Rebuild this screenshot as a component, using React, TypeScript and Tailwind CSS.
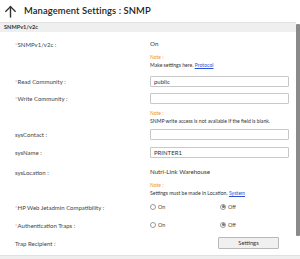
import React from 'react';

const font = { fontFamily: '"Lato", "Open Sans", "DejaVu Sans", sans-serif' };

const Req = () => <span className="text-[#f0a040]">*</span>;

const Label: React.FC<{ req?: boolean; children: React.ReactNode }> = ({ req, children }) => (
  <div className="w-[150px] pl-[15px] text-[6px] text-[#444] shrink-0 flex items-center">
    {req && <Req />}
    <span>{children}</span>
  </div>
);

const Input: React.FC<{ value?: string }> = ({ value }) => (
  <div className="w-[139px] h-[11px] border border-[#c8c8c8] rounded-[1px] bg-white flex items-center px-[3px] text-[6px] text-[#333]">
    {value}
  </div>
);

const Radio: React.FC<{ checked?: boolean; label: string }> = ({ checked, label }) => (
  <div className="flex items-center gap-[2px] text-[5.4px] text-[#444]">
    <div className="w-[6px] h-[6px] rounded-full border border-[#999] bg-white flex items-center justify-center">
      {checked && <div className="w-[3px] h-[3px] rounded-full bg-[#777]" />}
    </div>
    <span>{label}</span>
  </div>
);

const Note: React.FC<{ children: React.ReactNode; top: string }> = ({ children, top }) => (
  <div className={`flex ${top}`}>
    <div className="w-[150px] shrink-0" />
    <div className="flex flex-col">
      <div className="h-[7px] leading-[7px] text-[5px] text-[#f0903a]">Note :</div>
      <div className="h-[8px] leading-[8px] text-[5.1px] text-[#333]">{children}</div>
    </div>
  </div>
);

export default function App() {
  return (
    <div className="w-[300px] h-[259px] bg-white overflow-hidden flex flex-col" style={font}>
      {/* title */}
      <div className="h-[22px] flex items-center pl-[4px] gap-[7px]">
        <svg width="13" height="13" viewBox="0 0 24 24" fill="none" stroke="#333" strokeWidth="2.6" strokeLinecap="square">
          <path d="M12 22V3" />
          <path d="M3.5 11.5L12 3l8.5 8.5" />
        </svg>
        <span className="text-[9.4px] font-semibold text-[#222] tracking-[0.1px]">Management Settings : SNMP</span>
      </div>

      <div className="flex flex-1 min-h-0">
        <div className="flex-1 flex flex-col">
          <div className="h-[10px] bg-[#efefef] border-t border-[#e2e2e2] flex items-center pl-[4px] text-[5.6px] font-bold text-[#333]">
            SNMPv1/v2c
          </div>

          <div className="flex h-[12px] mt-[6px] items-center">
            <Label req>SNMPv1/v2c :</Label>
            <div className="text-[6.2px] text-[#333]">On</div>
          </div>

          <Note top="mt-[4px]">
            Make settings here. <span className="text-[#2a50d8] underline">Protocol</span>
          </Note>

          <div className="flex h-[11px] mt-[7px] items-center">
            <Label req>Read Community :</Label>
            <Input value="public" />
          </div>

          <div className="flex h-[11px] mt-[6px] items-center">
            <Label req>Write Community :</Label>
            <Input />
          </div>

          <Note top="mt-[6px]">SNMP write access is not available if the field is blank.</Note>

          <div className="flex h-[11px] mt-[4px] items-center">
            <Label>sysContact :</Label>
            <Input />
          </div>

          <div className="flex h-[11px] mt-[7px] items-center">
            <Label>sysName :</Label>
            <Input value="PRINTER1" />
          </div>

          <div className="flex h-[12px] mt-[8px] items-center">
            <Label>sysLocation :</Label>
            <div className="text-[6.2px] text-[#333]">Nutri-Link Warehouse</div>
          </div>

          <Note top="mt-[4px]">
            Settings must be made in Location. <span className="text-[#2a50d8] underline">System</span>
          </Note>

          <div className="flex h-[12px] mt-[4px] items-center">
            <Label req>HP Web Jetadmin Compatibility :</Label>
            <div className="w-[70px]"><Radio label="On" /></div>
            <Radio checked label="Off" />
          </div>

          <div className="flex h-[12px] mt-[6px] items-center">
            <Label req>Authentication Traps :</Label>
            <div className="w-[70px]"><Radio label="On" /></div>
            <Radio checked label="Off" />
          </div>

          <div className="flex h-[12px] mt-[6px] items-center">
            <Label>Trap Recipient :</Label>
            <div className="w-[68px] shrink-0" />
            <div className="w-[61px] h-[12px] border border-[#b8b8b8] rounded-[1px] bg-[#f0f0f0] flex items-center justify-center text-[5.8px] text-[#333]">
              Settings
            </div>
          </div>
        </div>

        {/* scrollbar */}
        <div className="w-[4px] flex flex-col">
          <div className="h-[2px]" />
          <div className="h-[212px] bg-[#8a8a8a] rounded-[1px]" />
        </div>
      </div>

      <div className="h-[4px] bg-[#eeeeee] border-t border-[#e0e0e0]" />
    </div>
  );
}
